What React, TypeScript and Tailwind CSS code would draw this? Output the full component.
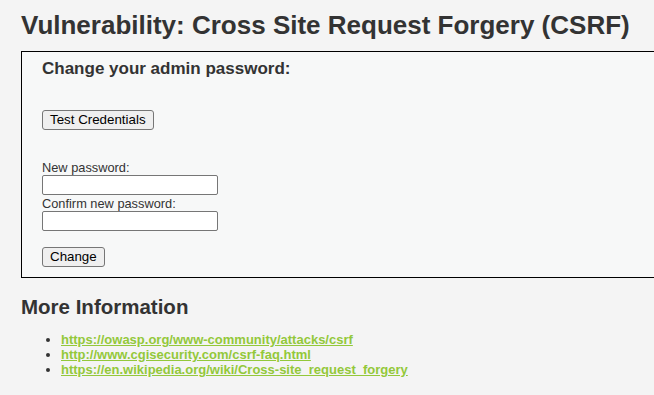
export default function App() {
  const links = [
    'https://owasp.org/www-community/attacks/csrf',
    'http://www.cgisecurity.com/csrf-faq.html',
    'https://en.wikipedia.org/wiki/Cross-site_request_forgery',
  ]

  return (
    <div className="min-h-screen overflow-hidden bg-[#f4f4f4] pl-[21px] pt-[10px] font-['Liberation_Sans',Arial,sans-serif] text-[#333]">
      {/* 페이지 제목 */}
      <h1 className="text-[26px] font-bold leading-[30px] whitespace-nowrap">
        Vulnerability: Cross Site Request Forgery (CSRF)
      </h1>

      {/* 비밀번호 변경 박스 */}
      <div className="mt-[11px] w-[660px] border border-black bg-[#f7f8f8] pl-[20px] pt-[7px] pb-[10px]">
        <h3 className="text-[17px] font-bold leading-[20px]">Change your admin password:</h3>

        <button className="mt-[31px] block h-[20px] rounded-[3px] border border-[#767676] bg-[#efefef] px-[7px] text-[13.33px] leading-[16px] text-black">
          Test Credentials
        </button>

        <div className="mt-[30px] text-[12.8px] leading-[15px]">New password:</div>
        <input
          type="password"
          className="block h-[20px] w-[176px] rounded-[2px] border border-[#767676] bg-white"
        />
        <div className="mt-[1px] text-[12.8px] leading-[15px]">Confirm new password:</div>
        <input
          type="password"
          className="block h-[20px] w-[176px] rounded-[2px] border border-[#767676] bg-white"
        />

        <button className="mt-[16px] block h-[20px] rounded-[3px] border border-[#767676] bg-[#efefef] px-[7px] text-[13.33px] leading-[16px] text-black">
          Change
        </button>
      </div>

      {/* 추가 정보 */}
      <h2 className="mt-[17px] text-[20.5px] font-bold leading-[24px]">More Information</h2>
      <ul className="mt-[13px] list-disc pl-10 text-[13px] font-bold leading-[15px]">
        {links.map((url) => (
          <li key={url}>
            <a href="#" className="text-[#93c83a] underline">
              {url}
            </a>
          </li>
        ))}
      </ul>
    </div>
  )
}
